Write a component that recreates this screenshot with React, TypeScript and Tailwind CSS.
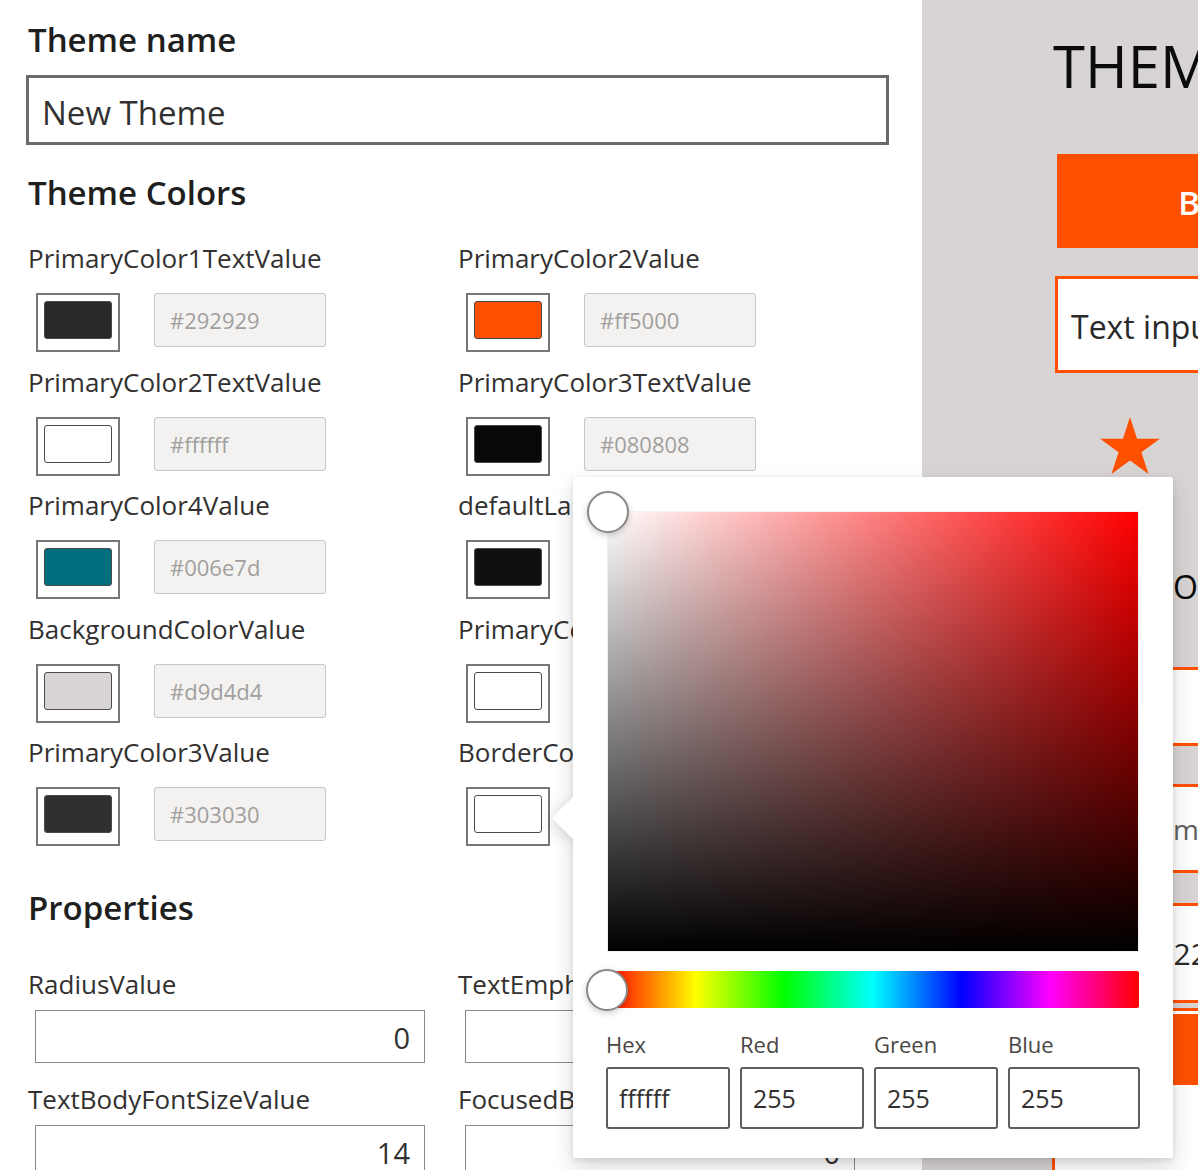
import React from "react";

const colorRows = [
  [
    { label: "PrimaryColor1TextValue", swatch: "bg-[#292929]", hex: "#292929" },
    { label: "PrimaryColor2Value", swatch: "bg-[#ff5000]", hex: "#ff5000" },
  ],
  [
    { label: "PrimaryColor2TextValue", swatch: "bg-[#ffffff]", hex: "#ffffff" },
    { label: "PrimaryColor3TextValue", swatch: "bg-[#080808]", hex: "#080808" },
  ],
  [
    { label: "PrimaryColor4Value", swatch: "bg-[#006e7d]", hex: "#006e7d" },
    { label: "defaultLabelColorValue", swatch: "bg-[#101010]", hex: "#101010" },
  ],
  [
    { label: "BackgroundColorValue", swatch: "bg-[#d9d4d4]", hex: "#d9d4d4" },
    { label: "PrimaryColor1Value", swatch: "bg-[#ffffff]", hex: "#ffffff" },
  ],
  [
    { label: "PrimaryColor3Value", swatch: "bg-[#303030]", hex: "#303030" },
    { label: "BorderColorValue", swatch: "bg-[#ffffff]", hex: "#ffffff" },
  ],
];

const propRows = [
  [
    { label: "RadiusValue", value: "0" },
    { label: "TextEmphasisFontSizeValue", value: "" },
  ],
  [
    { label: "TextBodyFontSizeValue", value: "14" },
    { label: "FocusedBorderWidthValue", value: "0" },
  ],
];

function ColorField({ label, swatch, hex }: { label: string; swatch: string; hex: string }) {
  return (
    <div className="h-[123.5px] w-[430px]">
      <div className="whitespace-nowrap text-[26px] leading-[33px] text-[#323130]">{label}</div>
      <div className="ml-[8px] mt-[18px] flex items-start gap-[34px]">
        <div className="h-[59px] w-[84px] border-2 border-[#767676] px-[6px] pt-[6px]">
          <div className={`h-[38px] w-full rounded-[3px] border-[1.5px] border-[#4a4a4a] ${swatch}`} />
        </div>
        <div className="h-[54px] w-[172px] rounded-[3px] border border-[#c8c6c4] bg-[#f3f2f1] px-[15px] text-[22px] leading-[52px] text-[#a19f9d]">
          {hex}
        </div>
      </div>
    </div>
  );
}

function PropField({ label, value }: { label: string; value: string }) {
  return (
    <div className="h-[115px] w-[430px]">
      <div className="whitespace-nowrap text-[26px] leading-[33px] text-[#323130]">{label}</div>
      <div className="ml-[7px] mt-[9.5px] flex h-[53px] w-[390px] items-center justify-end border-[1.5px] border-[#8a8886] pr-[14px] pt-[2px] text-[29px] text-[#323130]">
        {value}
      </div>
    </div>
  );
}

function ColorPickerCallout() {
  return (
    <div className="absolute left-[573px] top-[477px] h-[681px] w-[600px] rounded-[3px] bg-white shadow-[0_11px_25px_rgba(0,0,0,0.14),0_2px_6px_rgba(0,0,0,0.11)]">
      <div className="absolute left-[-15px] top-[326px] h-[30px] w-[30px] rotate-45 bg-white shadow-[0_4px_14px_rgba(0,0,0,0.14)]" />
      <div className="absolute inset-0 rounded-[3px] bg-white" />
      <div className="relative pl-[34px] pt-[34px]">
        <div className="relative h-[441px] w-[532px] border border-[#f3f2f1] bg-[#ff0000]">
          <div className="absolute inset-0 bg-gradient-to-r from-white to-transparent" />
          <div className="absolute inset-0 bg-gradient-to-b from-transparent to-black" />
          <div className="absolute left-[-21px] top-[-21px] h-[42px] w-[42px] rounded-full border-2 border-[#8a8886] bg-white shadow-[0_2px_6px_rgba(0,0,0,0.2)]" />
        </div>
        <div className="relative mt-[19px] h-[37px] w-[532px] rounded-[2px] bg-[linear-gradient(to_right,#ff0000_0%,#ffff00_16.7%,#00ff00_33.3%,#00ffff_50%,#0000ff_66.7%,#ff00ff_83.3%,#ff0000_100%)]">
          <div className="absolute left-[-21px] top-[-2.5px] h-[42px] w-[42px] rounded-full border-2 border-[#8a8886] bg-white shadow-[0_2px_6px_rgba(0,0,0,0.2)]" />
        </div>
        <div className="-ml-px mt-[21px] grid grid-cols-[124px_124px_124px_132px] gap-x-[10px] text-[#323130]">
          {[
            ["Hex", "ffffff"],
            ["Red", "255"],
            ["Green", "255"],
            ["Blue", "255"],
          ].map(([l, v]) => (
            <div key={l}>
              <div className="text-[22px] leading-[30px] text-[#484644]">{l}</div>
              <div className="mt-[8px] flex h-[62px] items-center rounded-[3px] border-2 border-[#605e5c] px-[11px] pt-[2px] text-[25px]">
                {v}
              </div>
            </div>
          ))}
        </div>
      </div>
    </div>
  );
}

function Preview() {
  return (
    <div className="min-w-0 flex-1 overflow-hidden bg-[#d9d4d4] pl-[131px]">
      <div className="w-[388px]">
        <div className="mt-[26px] whitespace-nowrap text-[58px] leading-[80px] text-[#0b0b0b]">THEME PREVIEW</div>
        <div className="ml-[4px] mt-[48px] flex h-[94px] w-[378px] items-center justify-center bg-[#ff5000] pt-[4px] text-[33px] font-semibold text-white">
          BUTTON
        </div>
        <div className="ml-[2px] mt-[28px] flex h-[97px] w-[388px] items-center border-[3px] border-[#ff5000] bg-white px-[13px] pt-[4px] text-[32px] text-[#292929]">
          Text input
        </div>
        <div className="ml-[47px] mt-[44px] h-[57px] w-[60px]">
          <svg viewBox="0 0 60 57" width="60" height="57">
            <polygon
              fill="#ff5000"
              points="30,0 37.08,21.76 59.96,21.77 41.45,35.22 48.52,56.98 30,43.54 11.48,56.98 18.55,35.22 0.04,21.77 22.92,21.76"
            />
          </svg>
        </div>
        <div className="mt-[91px] whitespace-nowrap pl-[120px] text-[32px] leading-[44px] text-[#0b0b0b]">OPTIONS</div>
        <div className="mt-[58px] h-[79px] border-[3px] border-[#ff5000] bg-white" />
        <div className="mt-[38px] flex h-[89px] items-center whitespace-nowrap border-[3px] border-[#ff5000] bg-white pl-[7px] text-[28px] text-[#605e5c]">
          Enter name
        </div>
        <div className="mt-[30px] flex h-[100px] items-center whitespace-nowrap border-[3px] border-[#ff5000] bg-white pl-[27px] text-[30px] text-[#292929]">
          1/1/2022
        </div>
        <div className="-ml-[1px] mt-[5px] h-[200px] border-[3px] border-[#ff5000] bg-white pt-[3px]">
          <div className="h-[71px] bg-[#ff5000]" />
        </div>
      </div>
    </div>
  );
}

export default function App() {
  return (
    <div
      className="relative flex h-[1170px] w-full overflow-hidden bg-white"
      style={{ fontFamily: '"Open Sans", "Noto Sans", sans-serif' }}
    >
      <div className="w-[922px] shrink-0 bg-white pl-[28px] pt-[17px]">
        <h2 className="text-[33px] font-semibold leading-[46px] text-[#201f1e]">Theme name</h2>
        <div className="-ml-[2px] mt-[12px] flex h-[70px] w-[863px] items-center border-[3px] border-[#6b6b6b] px-[13px] pt-[6px] text-[33px] text-[#323130]">
          New Theme
        </div>
        <h2 className="mt-[25px] text-[33px] font-semibold leading-[46px] text-[#201f1e]">Theme Colors</h2>
        <div className="mt-[26px]">
          {colorRows.map((row, i) => (
            <div key={i} className="flex">
              {row.map((c) => (
                <ColorField key={c.label} {...c} />
              ))}
            </div>
          ))}
        </div>
        <h2 className="mt-[25px] text-[33px] font-semibold leading-[46px] text-[#201f1e]">Properties</h2>
        <div className="mt-[37px]">
          {propRows.map((row, i) => (
            <div key={i} className="flex">
              {row.map((p) => (
                <PropField key={p.label} {...p} />
              ))}
            </div>
          ))}
        </div>
      </div>
      <Preview />
      <ColorPickerCallout />
    </div>
  );
}
